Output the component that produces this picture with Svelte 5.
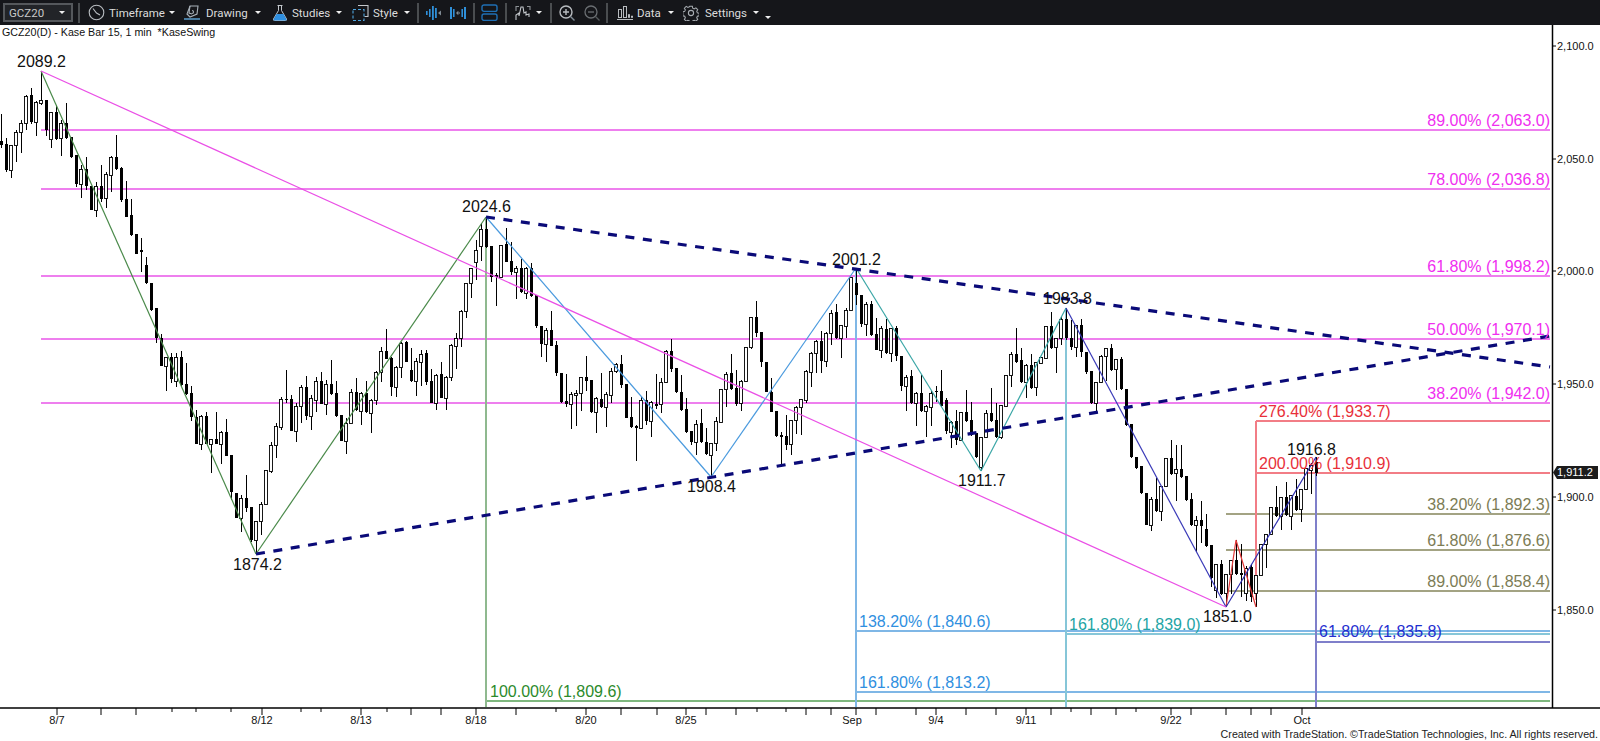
<script lang="ts">
    // hi, body top, body bottom, lo, filled. One bar every 5px from x = 1.33
    const bars = [
        [114,141,145,148,1],[138,144,170,172,1],[145,145,170,178,0],[130,132,145,162,0],[120,123,132,153,0],
        [95,96,123,130,0],[88,95,122,124,1],[101,102,122,136,0],[71,100,103,105,0],[100,100,130,136,1],
        [112,112,139,148,0],[105,112,139,140,1],[120,123,138,156,0],[103,123,138,139,1],[137,137,157,158,1],
        [155,155,184,187,1],[165,169,184,198,0],[157,169,186,190,1],[186,186,210,210,1],[182,186,210,217,0],
        [165,186,199,202,1],[172,174,198,208,0],[156,157,175,192,0],[135,157,169,170,1],[167,168,200,202,1],
        [181,199,217,217,1],[199,215,235,236,1],[234,234,254,254,1],[238,250,252,272,1],[257,265,283,284,1],
        [283,283,310,311,1],[308,308,338,343,1],[334,338,366,366,1],[357,357,366,391,0],[353,357,379,383,1],
        [353,357,381,387,0],[351,357,385,386,1],[363,384,394,395,1],[386,393,417,421,1],[410,417,444,444,1],
        [415,416,444,450,0],[412,416,444,444,1],[439,439,444,473,0],[412,439,444,444,1],[431,432,444,464,0],
        [419,432,456,456,1],[455,455,492,500,1],[493,493,518,518,1],[495,498,518,532,0],[475,498,508,512,1],
        [507,507,540,542,1],[521,521,540,553,0],[502,504,521,535,0],[470,470,504,504,0],[442,445,471,473,0],
        [423,426,445,458,0],[397,399,427,430,0],[370,399,400,403,1],[395,399,431,431,1],[403,406,431,442,0],
        [385,387,406,423,0],[376,387,416,420,1],[395,398,416,430,0],[377,381,400,412,0],[372,381,404,404,1],
        [380,384,404,415,0],[360,384,394,395,1],[381,393,416,417,1],[415,415,441,441,1],[418,423,441,454,0],
        [389,392,423,423,0],[378,392,410,411,1],[392,393,411,425,0],[381,393,412,413,1],[399,400,413,433,0],
        [371,372,400,405,0],[347,351,372,382,0],[329,351,359,359,1],[357,358,387,396,1],[366,367,387,397,0],
        [342,343,367,378,0],[341,342,362,362,1],[348,370,381,382,1],[358,361,381,396,0],[350,354,362,386,0],
        [350,353,382,385,1],[369,381,403,403,1],[374,375,403,410,0],[362,374,398,398,1],[376,377,398,410,0],
        [344,345,377,381,0],[333,338,346,369,0],[310,311,338,347,0],[283,283,311,318,0],[268,268,283,298,0],
        [240,250,262,280,0],[223,229,246,261,0],[217,229,247,248,1],[246,246,277,282,1],[273,275,277,306,1],
        [245,245,277,278,0],[228,244,262,262,1],[242,261,272,275,1],[266,268,272,299,0],[259,268,292,293,1],
        [267,268,293,299,0],[263,268,296,297,1],[295,295,326,328,1],[326,326,344,357,1],[328,330,344,362,0],
        [311,330,346,346,1],[341,345,373,376,1],[373,373,402,403,1],[374,401,404,407,1],[392,394,404,429,0],
        [390,393,395,426,0],[377,377,393,411,0],[356,377,381,391,1],[380,380,412,413,1],[397,398,412,433,0],
        [373,399,407,408,1],[392,394,407,427,0],[368,371,395,403,0],[363,364,371,373,0],[355,364,385,388,1],
        [384,384,418,418,1],[397,417,427,428,1],[425,426,428,461,1],[397,400,428,429,0],[391,400,421,425,1],
        [401,402,421,437,0],[374,404,406,409,1],[378,382,404,413,0],[350,351,382,383,0],[339,351,369,372,1],
        [368,368,392,393,1],[375,392,410,411,1],[398,409,432,433,1],[431,431,442,445,1],[420,424,442,455,0],
        [409,423,442,443,1],[428,442,454,455,1],[443,443,455,477,0],[417,421,443,451,0],[389,389,422,422,0],
        [372,374,389,407,0],[354,373,389,390,1],[370,388,404,406,1],[380,381,403,411,0],[347,347,381,382,0],
        [317,317,347,349,0],[301,317,333,337,1],[332,332,362,367,1],[362,362,392,392,1],[378,392,412,412,1],
        [411,411,436,437,1],[432,435,437,465,1],[415,436,445,450,1],[420,420,444,455,0],[406,407,420,434,0],
        [399,399,407,435,0],[370,371,400,403,0],[352,353,372,387,0],[340,341,353,373,0],[331,341,361,373,1],
        [332,333,361,367,0],[310,313,333,345,0],[304,312,338,339,1],[325,325,338,358,0],[308,310,326,338,0],
        [277,277,310,310,0],[268,283,295,305,1],[295,295,324,327,1],[302,304,324,336,0],[301,304,335,336,1],
        [318,334,350,350,1],[326,328,350,358,0],[319,329,353,354,1],[328,328,353,362,0],[326,328,356,361,1],
        [356,356,386,391,1],[375,377,386,411,0],[370,376,403,404,1],[392,393,403,426,0],[375,393,411,412,1],
        [405,406,411,437,0],[391,393,407,426,0],[386,391,392,402,1],[370,391,406,407,1],[398,400,431,434,1],
        [421,422,432,448,0],[410,421,440,445,1],[412,412,440,440,0],[390,412,421,422,1],[402,420,435,436,1],
        [433,433,457,458,1],[437,437,467,471,0],[410,413,437,438,0],[388,413,421,422,1],[403,420,437,438,1],
        [405,405,437,439,0],[375,375,406,407,0],[352,354,375,387,0],[328,354,362,363,1],[348,360,382,383,1],
        [364,365,382,398,0],[354,365,388,389,1],[362,362,387,396,0],[357,357,363,364,0],[326,326,358,359,0],
        [312,326,348,349,1],[338,338,347,373,0],[317,319,338,345,0],[308,319,338,340,1],[320,338,347,350,1],
        [325,325,347,357,0],[319,325,352,357,1],[352,352,372,374,1],[371,371,403,404,1],[382,382,403,413,0],
        [355,356,382,383,0],[348,348,356,381,0],[344,348,370,371,1],[359,359,369,390,0],[357,359,389,390,1],
        [389,389,425,426,1],[424,424,457,458,1],[457,457,468,469,1],[466,466,493,494,1],[493,493,525,525,1],
        [497,499,525,531,0],[478,499,511,512,1],[486,486,511,521,0],[458,458,486,487,0],[440,458,474,475,1],
        [445,469,473,501,0],[445,469,477,478,1],[476,476,500,501,1],[493,499,525,526,1],[516,520,525,552,0],
        [501,520,526,543,1],[514,529,546,547,1],[545,545,578,587,1],[564,564,590,598,0],[560,564,594,595,1],
        [574,574,593,607,0],[560,560,574,594,0],[540,560,574,575,1],[544,573,575,597,1],[566,568,593,601,0],
        [564,567,597,602,1],[575,575,593,607,0],[544,544,575,576,0],[534,534,544,568,0],[507,507,534,535,0],
        [486,507,516,517,1],[497,497,516,530,0],[482,497,515,516,1],[495,495,516,530,0],[479,496,510,511,1],
        [489,489,509,522,0],[468,468,489,490,0],[463,465,470,494,0],[457,462,473,476,1],
    ];

    const right = 1550;
    const pink = "#ee7fee";

    const levels = [
        { y: 130, x1: 41, c: pink, label: "89.00% (2,063.0)" },
        { y: 189, x1: 41, c: pink, label: "78.00% (2,036.8)" },
        { y: 276, x1: 41, c: pink, label: "61.80% (1,998.2)" },
        { y: 339, x1: 41, c: pink, label: "50.00% (1,970.1)" },
        { y: 403, x1: 41, c: pink, label: "38.20% (1,942.0)" },
    ];
    const olive = [
        { y: 514, label: "38.20% (1,892.3)" },
        { y: 550, label: "61.80% (1,876.6)" },
        { y: 591, label: "89.00% (1,858.4)" },
    ];

    // horizontal projection lines that have their label placed on the left
    const hlines = [
        { x1: 1256, y: 421, c: "#f27d86" },
        { x1: 1256, y: 473, c: "#f27d86" },
        { x1: 1316, y: 642, c: "#7f7fca" },
        { x1: 856, y: 631, c: "#7fb7e6" },
        { x1: 1066, y: 634, c: "#86c6d8" },
        { x1: 856, y: 692, c: "#7fb7e6" },
        { x1: 486, y: 701, c: "#7fb87f" },
    ];
    const vlines = [
        { x: 486, y1: 217, y2: 707, c: "#8fb98f" },
        { x: 856, y1: 268, y2: 707, c: "#7fb7e6" },
        { x: 1066, y1: 308, y2: 707, c: "#86c6d8" },
        { x: 1316, y1: 457, y2: 707, c: "#7f7fca" },
        { x: 1256, y1: 421, y2: 600, c: "#f27d86" },
    ];

    const swings = [
        { x1: 41, y1: 71, x2: 256, y2: 554, c: "#4a8a4a" },
        { x1: 256, y1: 554, x2: 486, y2: 217, c: "#4a8a4a" },
        { x1: 486, y1: 217, x2: 711, y2: 477, c: "#4a9ade" },
        { x1: 711, y1: 477, x2: 856, y2: 268, c: "#4a9ade" },
        { x1: 856, y1: 268, x2: 981, y2: 471, c: "#3aa6a6" },
        { x1: 981, y1: 471, x2: 1066, y2: 308, c: "#3aa6a6" },
        { x1: 1066, y1: 308, x2: 1226, y2: 607, c: "#3a3ab8" },
        { x1: 1226, y1: 607, x2: 1316, y2: 457, c: "#2f2fb0" },
        { x1: 41, y1: 71, x2: 1226, y2: 607, c: "#ea4fe6" },
    ];

    const pivots = [
        { x: 17, y: 67, t: "2089.2" },
        { x: 233, y: 570, t: "1874.2" },
        { x: 462, y: 212, t: "2024.6" },
        { x: 687, y: 492, t: "1908.4" },
        { x: 832, y: 265, t: "2001.2" },
        { x: 958, y: 486, t: "1911.7" },
        { x: 1043, y: 304, t: "1983.8" },
        { x: 1203, y: 622, t: "1851.0" },
        { x: 1287, y: 455, t: "1916.8" },
    ];

    const notes = [
        { x: 1259, y: 417, c: "#e8303a", t: "276.40% (1,933.7)" },
        { x: 1259, y: 469, c: "#e8303a", t: "200.00% (1,910.9)" },
        { x: 1319, y: 637, c: "#1f2fd0", t: "61.80% (1,835.8)" },
        { x: 1069, y: 630, c: "#1fa5a5", t: "161.80% (1,839.0)" },
        { x: 859, y: 627, c: "#2f8fe0", t: "138.20% (1,840.6)" },
        { x: 859, y: 688, c: "#2f8fe0", t: "161.80% (1,813.2)" },
        { x: 490, y: 697, c: "#2c8a2c", t: "100.00% (1,809.6)" },
    ];

    const prices = [
        { y: 46, t: "2,100.0" },
        { y: 159, t: "2,050.0" },
        { y: 271, t: "2,000.0" },
        { y: 384, t: "1,950.0" },
        { y: 497, t: "1,900.0" },
        { y: 610, t: "1,850.0" },
    ];

    const longTicks = [57,101,136,262,361,411,441,476,516,586,621,657,686,706,736,806,831,856,876,916,936,966,996,1026,1051,1091,1116,1171,1191,1226,1251,1271,1302];
    const shortTicks = [172,196,231,301,321,387,556,757,786,1071,1136];
    const dates = [
        { x: 57, t: "8/7" }, { x: 262, t: "8/12" }, { x: 361, t: "8/13" }, { x: 476, t: "8/18" },
        { x: 586, t: "8/20" }, { x: 686, t: "8/25" }, { x: 852, t: "Sep" }, { x: 936, t: "9/4" },
        { x: 1026, t: "9/11" }, { x: 1171, t: "9/22" }, { x: 1302, t: "Oct" },
    ];
</script>

<div class="page">
    <div class="toolbar">
        <div class="symbol"><span>GCZ20</span><i class="caret"></i></div>
        <b class="sep s1"></b>
        <div class="tool t-time">
            <svg width="17" height="17" viewBox="0 0 17 17" fill="none" stroke="#b8bcc0" stroke-width="1.1"><circle cx="8.5" cy="8.5" r="7.3"/><path d="M5 4.5 8.5 9l3.5 2"/></svg>
            <span>Timeframe</span><i class="caret"></i>
        </div>
        <div class="tool t-draw">
            <svg width="16" height="17" viewBox="0 0 16 17" fill="none" stroke="#a8b0b8" stroke-width="1.1"><path d="M6 2h8l-1 8-7 3-3-3z"/><path d="M6 2 5 9l3 1M8 6.5a1.5 1.5 0 1 1 0 3"/><path d="M0 15h16" stroke="#5fa8dc" stroke-width="1.4"/></svg>
            <span>Drawing</span><i class="caret"></i>
        </div>
        <div class="tool t-stud">
            <svg width="16" height="18" viewBox="0 0 16 18" fill="none"><path d="M5.5 1.5h5M6.5 1.5v5L1.5 15q-.5 1.5 1 1.5h11q1.5 0 1-1.5l-5-8.5v-5" stroke="#c4c8cc" stroke-width="1"/><path d="M4.5 10h7l3 5.5q.3 1-.7 1H2.2q-1 0-.7-1z" fill="#2f8fe0"/></svg>
            <span>Studies</span><i class="caret"></i>
        </div>
        <div class="tool t-style">
            <svg width="17" height="18" viewBox="0 0 17 18" fill="none" stroke-width="1.1"><path d="M6 1.5h10v11h-3.5" stroke="#c4c8cc"/><path d="M1 5.5h11v11H1z" stroke="#4fa6e0" stroke-dasharray="3 2"/></svg>
            <span>Style</span><i class="caret"></i>
        </div>
        <b class="sep s2"></b>
        <svg class="i1" width="16" height="14" viewBox="0 0 16 14" fill="#2f8fd8"><rect x="0" y="5" width="1.6" height="4"/><rect x="3" y="3" width="1.6" height="8"/><rect x="6" y="0" width="1.8" height="14"/><rect x="9" y="2" width="1.8" height="10"/><path d="m12 7 3-2.5v5z" fill="#7f8a94"/></svg>
        <svg class="i2" width="16" height="14" viewBox="0 0 16 14" fill="#2f8fd8"><rect x="0" y="1" width="2" height="12"/><rect x="14" y="1" width="2" height="12"/><rect x="3" y="3" width="1.6" height="8"/><rect x="11.4" y="3" width="1.6" height="8"/><path d="m6 7 2-2v4zM10 7 8.4 5v4z" fill="#7f8a94"/></svg>
        <b class="sep s3"></b>
        <svg class="i3" width="17" height="17" viewBox="0 0 17 17" fill="none" stroke="#1f6fb4" stroke-width="1.4"><rect x="1" y="1" width="15" height="6.4" rx="2"/><rect x="1" y="10" width="15" height="6.4" rx="2"/></svg>
        <b class="sep s4"></b>
        <div class="tool t-hand">
            <svg width="16" height="16" viewBox="0 0 16 16" fill="none" stroke="#8d9296" stroke-width="1.1"><path d="M1 6V1.5h3M12 1.5h3V5"/><path d="M1 15V10l3-2v3l2-9h2l1 6 2-1v3l3-1v3" stroke="#c4c8cc"/></svg>
            <i class="caret"></i>
        </div>
        <b class="sep s5"></b>
        <svg class="i5" width="16" height="16" viewBox="0 0 16 16" fill="none" stroke="#b8bcc0" stroke-width="1.4"><circle cx="7" cy="7" r="6"/><path d="M4 7h6M7 4v6"/><path d="m11.5 11.5 4 4" stroke="#7f8a94"/></svg>
        <svg class="i6" width="16" height="16" viewBox="0 0 16 16" fill="none" stroke="#6a6e72" stroke-width="1.3"><circle cx="7" cy="7" r="6"/><path d="M4 7h6"/><path d="m11.5 11.5 4 4" stroke="#55595c"/></svg>
        <b class="sep s6"></b>
        <div class="tool t-data">
            <svg width="16" height="15" viewBox="0 0 16 15" fill="none" stroke="#b8bcc0" stroke-width="1"><rect x="1.5" y="4.5" width="3" height="8"/><rect x="6.5" y="1.5" width="3" height="11"/><path d="M11.5 9.5h1v3h-1zM14.5 11h1v1.500h-1z" fill="#b8bcc0"/><path d="M0 14.500h16"/></svg>
            <span>Data</span><i class="caret"></i>
        </div>
        <div class="tool t-set">
            <svg width="16" height="16" viewBox="0 0 16 16" fill="none" stroke="#a8adb2" stroke-width="1.1"><path d="M6.600.8h2.800l.4 2 1.600.7 1.800-1.100 2 2-1.100 1.800.7 1.600 2 .4v2.800l-2 .4-.7 1.600 1.100 1.800-2 2-1.800-1.100-1.600.7-.4 2H6.600l-.4-2-1.600-.7-1.800 1.100-2-2 1.100-1.800-.7-1.600-2-.4V6.600l2-.4.700-1.600L.8 2.800l2-2 1.800 1.100 1.600-.7z" transform="translate(.6 .6) scale(.93)"/><circle cx="8" cy="8" r="2.600"/></svg>
            <span>Settings</span><i class="caret"></i>
        </div>
        <i class="caret low"></i>
    </div>

    <svg class="chart" viewBox="0 25 1600 716" width="1600" height="716">
        <text class="sub" x="2" y="36" xml:space="preserve">GCZ20(D) - Kase Bar 15, 1 min  *KaseSwing</text>

        {#each levels as l}
            <line x1={l.x1} x2={right} y1={l.y} y2={l.y} stroke={l.c} stroke-width="2" />
        {/each}
        {#each olive as l}
            <line x1="1226" x2={right} y1={l.y} y2={l.y} stroke="#a3a383" stroke-width="2" />
        {/each}
        {#each hlines as l}
            <line x1={l.x1} x2={right} y1={l.y} y2={l.y} stroke={l.c} stroke-width="2" />
        {/each}
        {#each vlines as l}
            <line x1={l.x} x2={l.x} y1={l.y1} y2={l.y2} stroke={l.c} stroke-width="2" />
        {/each}

        {#each bars as b, i}
            <line x1={1.5 + 5 * i} x2={1.5 + 5 * i} y1={b[0]} y2={b[3]} stroke="#000" />
            {#if b[4]}
                <rect x={5 * i} y={b[1]} width="3" height={Math.max(b[2] - b[1], 1)} fill="#000" />
            {:else}
                <rect x={5 * i - 0.5} y={b[1] + 0.5} width="3" height={Math.max(b[2] - b[1], 1)} fill="#fff" stroke="#000" stroke-width="0.9" />
            {/if}
        {/each}

        <polyline points="1226,607 1236,540 1256,607" fill="none" stroke="#e23a3a" stroke-width="1.2" />
        {#each swings as s}
            <line x1={s.x1} y1={s.y1} x2={s.x2} y2={s.y2} stroke={s.c} stroke-width="1.2" />
        {/each}
        <line x1="256" y1="554" x2="1550" y2="336" stroke="#0a0a78" stroke-width="3.2" stroke-dasharray="9 8.600" />
        <line x1="486" y1="217" x2="1550" y2="367" stroke="#0a0a78" stroke-width="3.2" stroke-dasharray="9 8.600" />

        {#each pivots as p}
            <text class="big" x={p.x} y={p.y} fill="#111">{p.t}</text>
        {/each}
        {#each levels as l}
            <text class="big" x={right} y={l.y - 4} text-anchor="end" fill="#f02ef0">{l.label}</text>
        {/each}
        {#each olive as l}
            <text class="big" x={right} y={l.y - 4} text-anchor="end" fill="#7c7c55">{l.label}</text>
        {/each}
        {#each notes as n}
            <text class="big" x={n.x} y={n.y} fill={n.c}>{n.t}</text>
        {/each}

        <line x1="0" x2="1600" y1="708" y2="708" stroke="#000" stroke-width="1.500" />
        <line x1="1552.500" x2="1552.500" y1="25" y2="708" stroke="#000" stroke-width="1.500" />
        {#each prices as p}
            <line x1="1553" x2="1556" y1={p.y} y2={p.y} stroke="#000" />
            <text class="axis" x="1557" y={p.y + 4}>{p.t}</text>
        {/each}
        {#each longTicks as x}
            <line x1={x} x2={x} y1="708" y2="715" stroke="#000" />
        {/each}
        {#each shortTicks as x}
            <line x1={x} x2={x} y1="708" y2="712" stroke="#000" />
        {/each}
        {#each dates as d}
            <text class="axis" x={d.x} y="724" text-anchor="middle">{d.t}</text>
        {/each}

        <path d="M1557 466h41v13h-41l-4-6.500z" fill="#1c1c1c" />
        <text class="axis last" x="1557" y="476">1,911.2</text>

        <text class="foot" x="1598" y="738" text-anchor="end">Created with TradeStation. ©TradeStation Technologies, Inc. All rights reserved.</text>
    </svg>
</div>

<style>
    :global(body) {
        margin: 0;
        background: #fff;
    }

    .page {
        width: 1600px;
        height: 741px;
        display: flex;
        flex-direction: column;
        overflow: hidden;
    }

    .toolbar {
        height: 25px;
        flex: none;
        display: flex;
        align-items: center;
        background: #15161a;
        color: #dcdcdc;
        font: 11.5px Roboto, sans-serif;
        letter-spacing: 0;
        padding-left: 3px;
        box-sizing: border-box;
    }

    .toolbar svg {
        flex: none;
    }

    .symbol {
        width: 70px;
        height: 19px;
        box-sizing: border-box;
        border: 2px solid #55585c;
        background: #222428;
        display: flex;
        align-items: center;
        justify-content: space-between;
        padding: 0 6px 0 4px;
        color: #c8c8c8;
    }

    .tool {
        display: flex;
        align-items: center;
    }

    .tool span {
        display: block;
        white-space: nowrap;
    }

    .caret {
        display: block;
        flex: none;
        width: 0;
        height: 0;
        border-left: 3px solid transparent;
        border-right: 3px solid transparent;
        border-top: 3px solid #eee;
    }

    .tool .caret {
        margin-left: 7px;
    }

    .tool.t-hand .caret {
        margin-left: 5px;
    }

    .caret.low {
        margin: 9px 0 0 6px;
    }

    .sep {
        display: block;
        flex: none;
        width: 2px;
        height: 20px;
        background: #4a4d50;
    }

    .s1 { margin: 0 8px 0 5px; }
    .s2 { margin: 0 7px; }
    .s3 { margin: 0 6px 0 0; }
    .s4 { margin: 0 8px 0 0; }
    .s5 { margin: 0 7px 0 8px; }
    .s6 { margin: 0 9px 0 0; }

    .i1, .i5 { margin-right: 8px; }
    .i5 { margin-right: 9px; }
    .i2 { margin-right: 7px; }
    .i3 { margin-right: 7px; }
    .i6 { margin-right: 6px; }

    .t-time span { width: 53px; margin-left: 4px; }
    .t-draw { margin-left: 9px; }
    .t-draw span { width: 42px; margin-left: 6px; }
    .t-stud { margin-left: 11px; }
    .t-stud span { width: 37px; margin-left: 4px; }
    .t-style { margin-left: 10px; }
    .t-style span { width: 24px; margin-left: 4px; }
    .t-data span { width: 24px; margin-left: 4px; }
    .t-set { margin-left: 9px; }
    .t-set span { width: 41px; margin-left: 6px; }

    .chart {
        display: block;
        flex: none;
    }

    text {
        font-family: "Liberation Sans", Arial, sans-serif;
    }

    .sub {
        font-size: 10.700px;
        fill: #111;
        white-space: pre;
    }

    .big {
        font-size: 16px;
    }

    .axis {
        font-size: 11px;
        fill: #111;
    }

    .last {
        fill: #fff;
    }

    .foot {
        font-size: 10.700px;
        fill: #222;
    }
</style>
